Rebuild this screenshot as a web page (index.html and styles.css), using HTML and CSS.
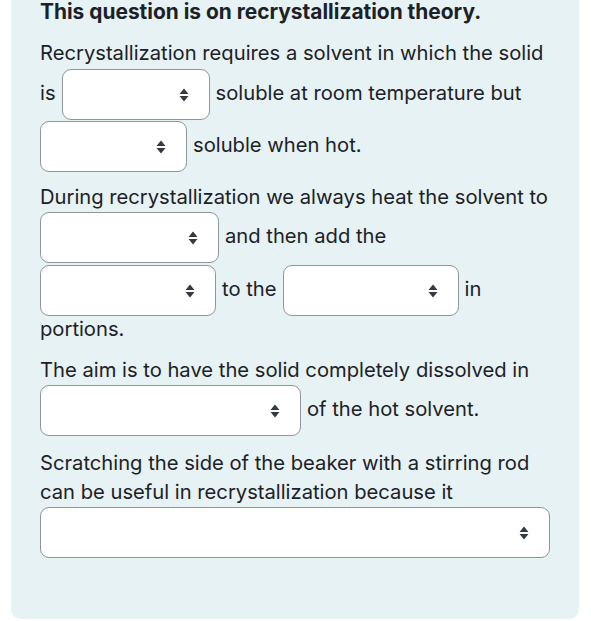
FILE: index.html
```html
<!DOCTYPE html>
<html>
<head>
<meta charset="utf-8">
<link rel="stylesheet" href="styles.css">
</head>
<body>
<div class="panel">
  <h1 class="title">This question is on recrystallization theory.</h1>
  <p class="txt p1">Recrystallization requires a solvent in which the solid</p>
  <div class="row r1"><span class="t">is</span><span class="sel w148"><svg class="arr" viewBox="0 0 10 14"><path d="M5 0.5 L9.5 6 H0.5 Z M5 13.5 L9.5 8 H0.5 Z"/></svg></span><span class="t">soluble at room temperature but</span></div>
  <div class="row r2"><span class="sel w147"><svg class="arr" viewBox="0 0 10 14"><path d="M5 0.5 L9.5 6 H0.5 Z M5 13.5 L9.5 8 H0.5 Z"/></svg></span><span class="t">soluble when hot.</span></div>
  <p class="txt p2">During recrystallization we always heat the solvent to</p>
  <div class="row r3"><span class="sel w179"><svg class="arr" viewBox="0 0 10 14"><path d="M5 0.5 L9.5 6 H0.5 Z M5 13.5 L9.5 8 H0.5 Z"/></svg></span><span class="t">and then add the</span></div>
  <div class="row r4"><span class="sel w176"><svg class="arr" viewBox="0 0 10 14"><path d="M5 0.5 L9.5 6 H0.5 Z M5 13.5 L9.5 8 H0.5 Z"/></svg></span><span class="t">to the</span><span class="sel w176"><svg class="arr" viewBox="0 0 10 14"><path d="M5 0.5 L9.5 6 H0.5 Z M5 13.5 L9.5 8 H0.5 Z"/></svg></span><span class="t">in</span></div>
  <p class="txt p3">portions.</p>
  <p class="txt p4">The aim is to have the solid completely dissolved in</p>
  <div class="row r5"><span class="sel w261"><svg class="arr" viewBox="0 0 10 14"><path d="M5 0.5 L9.5 6 H0.5 Z M5 13.5 L9.5 8 H0.5 Z"/></svg></span><span class="t">of the hot solvent.</span></div>
  <p class="txt p5">Scratching the side of the beaker with a stirring rod<br>can be useful in recrystallization because it</p>
  <div class="row r6"><span class="sel w510"><svg class="arr" viewBox="0 0 10 14"><path d="M5 0.5 L9.5 6 H0.5 Z M5 13.5 L9.5 8 H0.5 Z"/></svg></span></div>
</div>
</body>
</html>
```

FILE: styles.css
```css
html, body {
  margin: 0;
  padding: 0;
  background: #ffffff;
}
body {
  font-family: "Inter", "Liberation Sans", sans-serif;
  color: #1d2125;
  font-size: 20.2px;
}
.panel {
  margin: 0 12px 0 11px;
  background: #e7f2f5;
  border-radius: 0 0 10px 10px;
  padding: 0 29px 61px 29px;
}
.title {
  margin: 0;
  font-size: 20.9px;
  font-weight: 700;
  line-height: 24px;
}
.txt {
  margin: 0;
  line-height: 29px;
}
.p1 { margin-top: 14px; }
.p2 { margin-top: 10px; }
.p3 { margin-top: -2px; }
.p4 { margin-top: 12px; }
.p5 { margin-top: 12px; }
.row {
  display: flex;
  align-items: center;
  gap: 6px;
  line-height: 29px;
}
.t {
  padding-bottom: 4px;
}
.r1 { margin-top: 2px; gap: 8px 6px; }
.r2 { margin-top: 1px; }
.r3 { margin-top: 1px; }
.r4 { margin-top: 2px; }
.r5 { margin-top: 1px; }
.r6 { margin-top: 1px; }
.sel {
  box-sizing: border-box;
  height: 51px;
  background: #ffffff;
  border: 1px solid #8f959b;
  border-radius: 9px;
  display: flex;
  align-items: center;
  justify-content: flex-end;
  padding-right: 20px;
  flex: none;
}
.arr {
  width: 10px;
  height: 14px;
  fill: #343a40;
}
.w147 { width: 147px; }
.w148 { width: 148px; }
.w176 { width: 176px; }
.w179 { width: 179px; }
.w261 { width: 261px; }
.w510 { width: 510px; }
```
